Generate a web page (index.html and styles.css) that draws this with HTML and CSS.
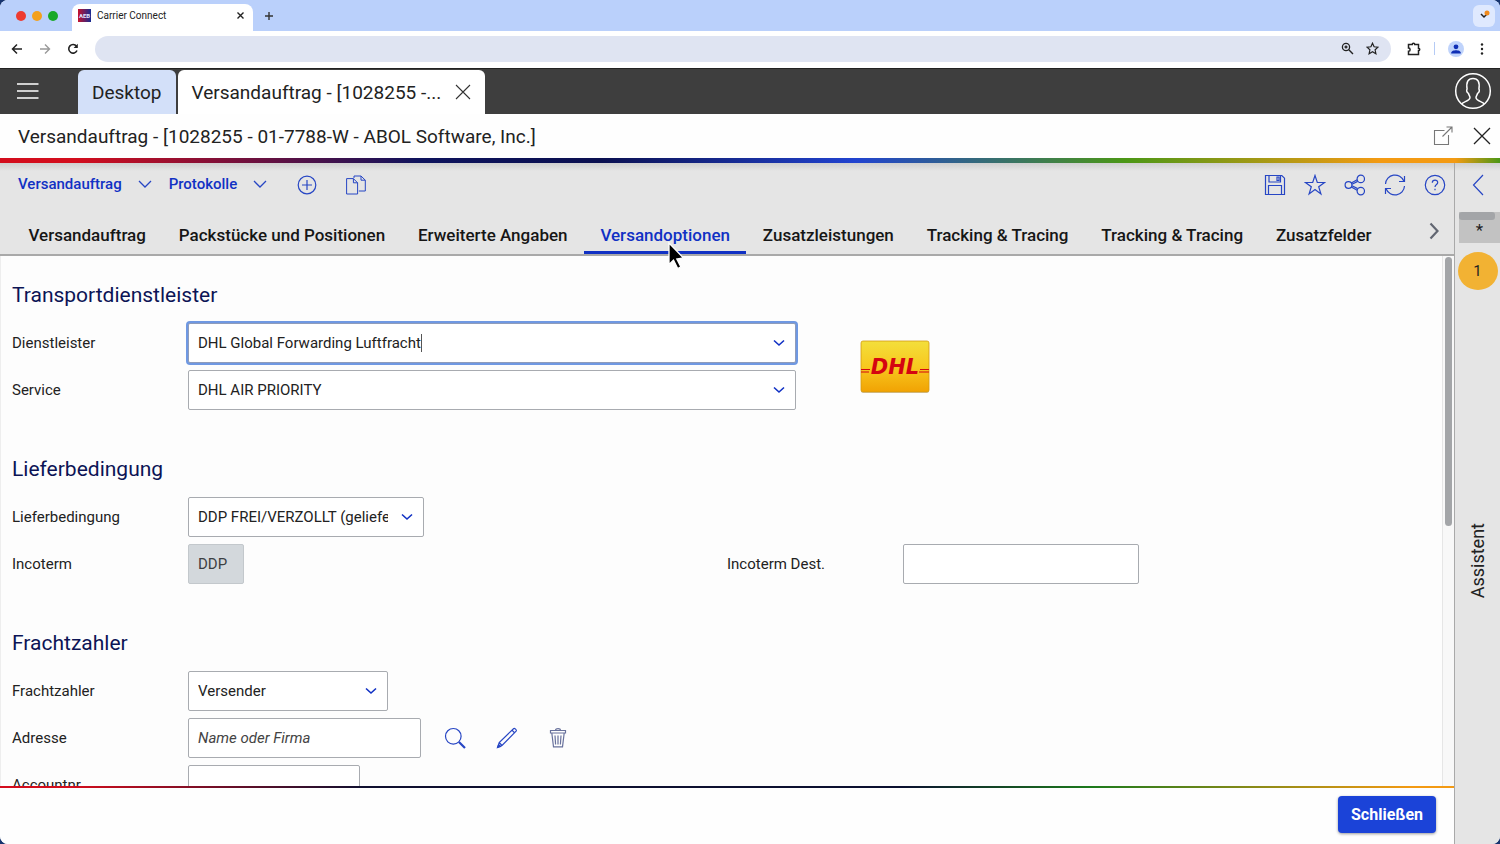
FILE: index.html
```html
<!DOCTYPE html>
<html lang="de">
<head>
  <meta charset="UTF-8">
  <meta name="viewport" content="width=device-width, initial-scale=1.0">
  <title>Carrier Connect</title>
  <link rel="stylesheet" href="styles.css">
</head>
<body>
  <div class="window">
    <div class="tabstrip">
      <div class="lights">
        <span class="light red"></span>
        <span class="light yellow"></span>
        <span class="light green"></span>
      </div>
      <div class="browser-tab">
        <svg class="favicon" width="13" height="13" viewBox="0 0 13 13">
          <defs>
            <linearGradient id="fav"><stop offset="0" stop-color="#c5122c"/><stop offset="1" stop-color="#152c93"/></linearGradient>
          </defs>
          <rect width="13" height="13" fill="url(#fav)"/>
          <text x="6.5" y="9" text-anchor="middle" font-size="6" font-family="Roboto, sans-serif" font-weight="700" fill="#dfe3ff">AEB</text>
        </svg>
        <span class="browser-title">Carrier Connect</span>
        <button class="plain" aria-label="Tab schließen">
          <svg width="9" height="9" viewBox="0 0 9 9"><path d="M1.5 1.5l6 6M7.5 1.5l-6 6" stroke="#222" stroke-width="1.4"/></svg>
        </button>
      </div>
      <button class="plain new-tab" aria-label="Neuer Tab">
        <svg width="10" height="10" viewBox="0 0 10 10"><path d="M5 1v8M1 5h8" stroke="#333" stroke-width="1.4"/></svg>
      </button>
      <button class="plain tab-search" aria-label="Tabs durchsuchen">
        <svg width="22" height="22" viewBox="0 0 22 22"><path d="M8 9l3 3 3-3" fill="none" stroke="#222" stroke-width="1.5"/><circle cx="14" cy="8" r="2.5" fill="#f08a1c"/></svg>
      </button>
    </div>

    <div class="browser-bar">
      <button class="plain nav" aria-label="Zurück">
        <svg width="12" height="12" viewBox="0 0 12 12"><path d="M11 6H2M6 1.5L1.5 6 6 10.500" fill="none" stroke="#222" stroke-width="1.5"/></svg>
      </button>
      <button class="plain nav" aria-label="Vor">
        <svg width="12" height="12" viewBox="0 0 12 12"><path d="M1 6h9M6 1.500L10.500 6 6 10.500" fill="none" stroke="#999" stroke-width="1.4"/></svg>
      </button>
      <button class="plain nav" aria-label="Neu laden">
        <svg width="12" height="12" viewBox="0 0 12 12"><path d="M10 7.500A4.300 4.300 0 1 1 9.500 3.200" fill="none" stroke="#222" stroke-width="1.6"/><path d="M10.800 .8v4.200H6.600z" fill="#222"/></svg>
      </button>
      <div class="address">
        <input type="text" aria-label="Adressleiste">
        <svg width="13" height="13" viewBox="0 0 13 13"><circle cx="5" cy="5" r="3.600" fill="none" stroke="#222" stroke-width="1.300"/><path d="M3.500 5h3M5 3.500v3M7.800 7.800L12 12" stroke="#222" stroke-width="1.400"/></svg>
        <svg width="13" height="13" viewBox="0 0 13 13"><path d="M6.500 1.200l1.600 3.600 3.900.4-2.900 2.600.8 3.900-3.400-2-3.400 2 .8-3.900L1 5.200l3.900-.4z" fill="none" stroke="#222" stroke-width="1.200"/></svg>
      </div>
      <svg width="14" height="14" viewBox="0 0 14 14"><path d="M1.500 2.500h3.700a1.300 1.300 0 0 1 2.600 0h3.700v3.700a1.200 1.200 0 0 1 0 2.400v3.900h-10V9.300a1.600 1.600 0 0 0 0-3.200z" fill="none" stroke="#222" stroke-width="1.500"/></svg>
      <span class="bar-sep"></span>
      <svg width="16" height="16" viewBox="0 0 16 16"><circle cx="8" cy="8" r="8" fill="#bfd3fb"/><circle cx="8" cy="5.800" r="2.400" fill="#0f2fb5"/><path d="M3.200 12.500v-.8C3.200 10 6 9.200 8 9.200s4.800.8 4.800 2.500v.8z" fill="#0f2fb5"/></svg>
      <svg width="4" height="14" viewBox="0 0 4 14" fill="#222"><circle cx="2" cy="2.500" r="1.200"/><circle cx="2" cy="7" r="1.200"/><circle cx="2" cy="11.500" r="1.200"/></svg>
    </div>

    <header class="app-header">
      <button class="plain burger" aria-label="Menü">
        <svg width="22" height="18" viewBox="0 0 22 18"><path d="M0 2h21.500M0 9h21.500M0 16h21.500" stroke="#fff" stroke-width="1.500"/></svg>
      </button>
      <a class="app-tab" href="#">Desktop</a>
      <div class="app-tab active">
        <a href="#">Versandauftrag - [1028255 -...</a>
        <button class="plain" aria-label="Schließen">
          <svg width="16" height="16" viewBox="0 0 16 16"><path d="M1 1l14 14M15 1L1 15" stroke="#333" stroke-width="1.100"/></svg>
        </button>
      </div>
      <button class="plain user" aria-label="Benutzer">
        <svg width="38" height="38" viewBox="0 0 38 38" fill="none" stroke="#fff" stroke-width="1.500">
          <circle cx="19" cy="19" r="17.300"/>
          <path d="M7.500 32c1.500-2.500 8.500-2.800 8.500-6.500 0-1.500-1-2-1.600-4.200-1.800-.9-2.100-3.300-1.300-4.200C12 10 14 6.500 19 6.500s7 3.500 5.900 10.600c.8.900.5 3.300-1.300 4.200-.6 2.200-1.600 2.700-1.600 4.200 0 3.700 7 4 8.500 6.500"/>
        </svg>
      </button>
    </header>

    <div class="title-bar">
      <h1>Versandauftrag - [1028255 - 01-7788-W - ABOL Software, Inc.]</h1>
      <button class="plain" aria-label="In neuem Fenster öffnen">
        <svg width="20" height="20" viewBox="0 0 20 20" fill="none" stroke="#777" stroke-width="1.100"><path d="M11.500 4.500H1.500v14h14V9M9.500 10.500L19 1M13.500 1H19v5.500"/></svg>
      </button>
      <button class="plain" aria-label="Fenster schließen">
        <svg width="18" height="18" viewBox="0 0 18 18"><path d="M1 1l16 16M17 1L1 17" stroke="#222" stroke-width="1.300"/></svg>
      </button>
    </div>
    <div class="rainbow"></div>

    <div class="workspace">
      <main class="main">
        <div class="tools">
          <div class="toolbar">
            <button class="menu">Versandauftrag
              <svg width="14" height="8" viewBox="0 0 14 8"><path d="M1 1l6 6 6-6" fill="none" stroke="#2746c4" stroke-width="1.300"/></svg>
            </button>
            <button class="menu">Protokolle
              <svg width="14" height="8" viewBox="0 0 14 8"><path d="M1 1l6 6 6-6" fill="none" stroke="#2746c4" stroke-width="1.300"/></svg>
            </button>
            <button class="plain add" aria-label="Neu">
              <svg class="icon" width="20" height="20" viewBox="0 0 20 20"><circle cx="10" cy="10" r="8.800"/><path d="M10 5v10M5 10h10"/></svg>
            </button>
            <button class="plain copy" aria-label="Kopieren">
              <svg class="icon thin" width="20" height="20" viewBox="0 0 20 20"><path d="M.6 3.600h6.800l4.200 4.200v11.200H.6zM7.400 3.600v4.200h4.200M8 3V1h7l4.300 4.200V16h-6.500M15 1v4.200h4.300"/></svg>
            </button>
            <div class="actions">
              <button class="plain" aria-label="Speichern">
                <svg class="icon" width="22" height="22" viewBox="0 0 22 22"><path d="M1.500 1.500h16.300l2.700 2.700v16.300h-19zM5 1.500v6.500h11.500V1.500M13 3h2v3.500h-2zM4.500 20.500v-9h13v9"/></svg>
              </button>
              <button class="plain" aria-label="Favorit">
                <svg class="icon" width="22" height="22" viewBox="0 0 22 22"><path d="M11 1.500l2.300 7h7.200l-5.800 4.300 2.200 7.200-5.900-4.400L5.100 20l2.200-7.200L1.500 8.500h7.200z"/></svg>
              </button>
              <button class="plain" aria-label="Teilen">
                <svg class="icon" width="22" height="22" viewBox="0 0 22 22"><circle cx="4.500" cy="11" r="3.400"/><circle cx="16.800" cy="4.900" r="3.700"/><circle cx="16.800" cy="17.100" r="3.700"/><path d="M7.300 9L13.100 5.800M8 10.200l5.700-2.800M7.300 13l5.800 3.200M8 11.800l5.700 2.800"/></svg>
              </button>
              <button class="plain" aria-label="Aktualisieren">
                <svg class="icon" width="22" height="22" viewBox="0 0 22 22"><path d="M1.500 10A9.500 9.500 0 0 1 19.800 7M20.500 2v5.500H15M20.500 12A9.500 9.500 0 0 1 2.200 15M1.500 20v-5.500H7"/></svg>
              </button>
              <button class="plain" aria-label="Hilfe">
                <svg class="icon" width="22" height="22" viewBox="0 0 22 22"><circle cx="11" cy="11" r="9.700"/><path d="M8.300 8.800c0-3.600 5.600-3.500 5.400-.2C13.600 10.500 11 10.500 11 13M11 14.700v1.600"/></svg>
              </button>
            </div>
          </div>
          <nav class="tabs">
            <a class="tab" href="#">Versandauftrag</a>
            <a class="tab" href="#">Packstücke und Positionen</a>
            <a class="tab" href="#">Erweiterte Angaben</a>
            <a class="tab selected" href="#">Versandoptionen
              <svg class="cursor" width="18" height="30" viewBox="0 0 18 30"><path d="M2 2v21.500l4.500-4.300 4.200 8.300 3.200-1.600-4.100-8L16.500 17z" fill="#000" stroke="#fff" stroke-width="1.300"/></svg>
            </a>
            <a class="tab" href="#">Zusatzleistungen</a>
            <a class="tab" href="#">Tracking &amp; Tracing</a>
            <a class="tab" href="#">Tracking &amp; Tracing</a>
            <a class="tab" href="#">Zusatzfelder</a>
            <button class="plain more" aria-label="Weitere Reiter">
              <svg width="10" height="18" viewBox="0 0 10 18"><path d="M1.500 1.500L8.500 9l-7 7.500" fill="none" stroke="#626772" stroke-width="2.200"/></svg>
            </button>
          </nav>
        </div>

        <div class="content">
          <form class="form">
            <section>
              <h2>Transportdienstleister</h2>
              <div class="carrier">
                <div class="rows wide">
                  <div class="row">
                    <label for="carrier">Dienstleister</label>
                    <div class="combo focused">
                      <input id="carrier" type="text" value="DHL Global Forwarding Luftfracht">
                      <span class="caret"></span>
                      <button type="button" class="plain" aria-label="Auswahl öffnen">
                        <svg class="chevron" width="12" height="8" viewBox="0 0 12 8"><path d="M1 1.500l5 4.500 5-4.500"/></svg>
                      </button>
                    </div>
                  </div>
                  <div class="row">
                    <label for="service">Service</label>
                    <div class="select">
                      <select id="service"><option>DHL AIR PRIORITY</option></select>
                      <svg class="chevron" width="12" height="8" viewBox="0 0 12 8"><path d="M1 1.500l5 4.500 5-4.500"/></svg>
                    </div>
                  </div>
                </div>
                <svg class="dhl" width="70" height="54" viewBox="0 0 70 54">
                  <defs>
                    <linearGradient id="dhl" x2="0" y2="1"><stop offset="0" stop-color="#f3df3b"/><stop offset=".5" stop-color="#f8c81f"/><stop offset="1" stop-color="#f1a203"/></linearGradient>
                  </defs>
                  <rect x="1" y="2" width="68" height="51" rx="2" fill="#cfcac0"/>
                  <rect x="1" y="1" width="68" height="51" rx="2" fill="url(#dhl)" stroke="#d39b12" stroke-width=".8"/>
                  <path d="M1 29.500h9M1 32h8M60 29.500h9M59 32h10" stroke="#d40511" stroke-width="1.200"/>
                  <text x="35" y="34" text-anchor="middle" font-family="DejaVu Sans, sans-serif" font-size="21" font-weight="700" font-style="italic" fill="#d40511">DHL</text>
                </svg>
              </div>
            </section>

            <section>
              <h2>Lieferbedingung</h2>
              <div class="rows">
                <div class="row">
                  <label for="terms">Lieferbedingung</label>
                  <div class="select w-terms">
                    <select id="terms"><option>DDP FREI/VERZOLLT (geliefert Zoll bezahlt)</option></select>
                    <svg class="chevron" width="12" height="8" viewBox="0 0 12 8"><path d="M1 1.500l5 4.500 5-4.500"/></svg>
                  </div>
                </div>
                <div class="halves">
                  <div class="row">
                    <label for="incoterm">Incoterm</label>
                    <input class="box w-code" id="incoterm" type="text" value="DDP" disabled>
                  </div>
                  <div class="row">
                    <label for="dest">Incoterm Dest.</label>
                    <input class="box w-terms" id="dest" type="text">
                  </div>
                </div>
              </div>
            </section>

            <section>
              <h2>Frachtzahler</h2>
              <div class="rows">
                <div class="row">
                  <label for="payer">Frachtzahler</label>
                  <div class="select w-payer">
                    <select id="payer"><option>Versender</option></select>
                    <svg class="chevron" width="12" height="8" viewBox="0 0 12 8"><path d="M1 1.500l5 4.500 5-4.500"/></svg>
                  </div>
                </div>
                <div class="row">
                  <label for="address">Adresse</label>
                  <input class="box w-address" id="address" type="text" placeholder="Name oder Firma">
                  <div class="row-actions">
                    <button type="button" class="plain" aria-label="Suchen">
                      <svg class="icon" width="22" height="22" viewBox="0 0 22 22"><circle cx="9.300" cy="9.300" r="7.800"/><path d="M15 15l6 6" stroke-width="2.200"/></svg>
                    </button>
                    <button type="button" class="plain" aria-label="Bearbeiten">
                      <svg class="icon" width="22" height="22" viewBox="0 0 22 22"><path d="M2 20l1.200-4.500L17.500 1.700c1-1 3.600 1.400 2.600 2.500L6 18.500zM3.200 15.500L6 18.500M16 3.200L18.700 6"/><path d="M1.500 20.500l1-3 2 2z" fill="#2746c4"/></svg>
                    </button>
                    <button type="button" class="plain" aria-label="Löschen">
                      <svg class="icon trash" width="20" height="22" viewBox="0 0 20 22"><path d="M2.500 3.500h15v2.500h-15zM7.500 3.500c0-2.500 5-2.500 5 0M3.800 6l1.700 13.800h9L16.200 6M7 8.500l.6 9M10 8.500v9M13 8.500l-.6 9"/></svg>
                    </button>
                  </div>
                </div>
                <div class="row">
                  <label for="account">Accountnr.</label>
                  <input class="box w-account" id="account" type="text">
                </div>
              </div>
            </section>
          </form>
          <div class="scrollbar"><div class="thumb"></div></div>
        </div>

        <footer class="footer">
          <button class="primary">Schließen</button>
        </footer>
      </main>

      <aside class="sidebar">
        <button class="plain collapse" aria-label="Ausklappen">
          <svg class="icon" width="12" height="22" viewBox="0 0 12 22"><path d="M11 1L1.500 11 11 21"/></svg>
        </button>
        <div class="filter"><span class="filter-bar"></span>*</div>
        <span class="badge">1</span>
        <span class="assistant">Assistent</span>
      </aside>
    </div>
  </div>
</body>
</html>
```
FILE: styles.css
```css
* {
  box-sizing: border-box;
}

body {
  margin: 0;
  background: #17346f;
  color: #222;
  font-family: Roboto, sans-serif;
  font-size: 15px;
}

a {
  color: inherit;
  text-decoration: none;
}

svg {
  display: block;
  flex: none;
}

input,
select,
button {
  font: inherit;
  color: inherit;
}

.plain {
  display: flex;
  align-items: center;
  justify-content: center;
  padding: 0;
  border: 0;
  background: none;
}

.window {
  display: flex;
  flex-direction: column;
  height: 100vh;
  overflow: hidden;
  border-radius: 8px;
  background: #fdfdfd;
}

/* browser */
.tabstrip {
  display: flex;
  align-items: center;
  height: 31px;
  padding: 0 5px 0 16px;
  background: #bad0fb;
}

.lights {
  display: flex;
  gap: 6px;
  width: 56px;
}

.light {
  width: 10px;
  height: 10px;
  border-radius: 50%;
}

.red {
  background: #ee3a30;
}

.yellow {
  background: #f3a01c;
}

.green {
  background: #17a927;
}

.browser-tab {
  display: flex;
  align-items: center;
  align-self: flex-end;
  width: 181px;
  height: 27px;
  padding: 0 8px 4px 6px;
  border-radius: 8px 8px 0 0;
  background: #fff;
}

.browser-title {
  flex: 1;
  margin-left: 6px;
  font-size: 10px;
}

.new-tab {
  margin-left: 11px;
}

.tab-search {
  width: 22px;
  height: 22px;
  margin-left: auto;
  border-radius: 6px;
  background: #dfe9fe;
}

.browser-bar {
  display: flex;
  align-items: center;
  gap: 16px;
  height: 37px;
  padding: 0 16px 2px 11px;
  background: #fff;
}

.address {
  display: flex;
  align-items: center;
  gap: 12px;
  flex: 1;
  height: 26px;
  padding: 0 12px 0 16px;
  border-radius: 13px;
  background: #dfe4f2;
}

.address input {
  flex: 1;
  min-width: 0;
  border: 0;
  outline: 0;
  background: none;
}

.bar-sep {
  width: 1px;
  height: 13px;
  margin: 0 -3px;
  background: #b5cbf5;
}

/* application header */
.app-header {
  display: flex;
  align-items: flex-end;
  gap: 2px;
  height: 46px;
  background: #3e3e3e;
  border-top: 1px solid #222;
}

.burger {
  align-self: center;
  width: 58px;
  padding: 0 2px 2px 0;
  margin-right: 18px;
}

.app-tab {
  display: flex;
  align-items: center;
  height: 44px;
  padding: 0 14px;
  border-radius: 6px 6px 0 0;
  background: #d3e0f9;
  font-size: 19px;
}

.app-tab.active {
  gap: 14px;
  background: #fff;
}

.user {
  align-self: center;
  padding-bottom: 2px;
  margin: 0 8px 0 auto;
}

.title-bar {
  display: flex;
  align-items: center;
  gap: 20px;
  height: 44px;
  padding: 0 9px 0 18px;
  background: #fefefe;
}

.title-bar h1 {
  flex: 1;
  margin: 0;
  font-size: 19px;
  font-weight: 400;
}

.rainbow {
  flex: none;
  height: 5px;
  background: linear-gradient(90deg, #d30d1d 5%, #0d125c 28%, #0b1050 40%, #2143d0 57%, #4b9716 75%, #f39a13 92%, #f39a13 97%, #4b9716);
}

.workspace {
  display: flex;
  flex: 1;
  min-height: 0;
}

.main {
  display: flex;
  flex-direction: column;
  flex: 1;
  min-width: 0;
}

/* toolbar and tabs */
.tools {
  border-bottom: 2px solid #a9a9a9;
  background: linear-gradient(#cfcfcf, #e5e5e5 8px);
}

.toolbar {
  display: flex;
  align-items: center;
  height: 44px;
  padding: 0 8px 0 18px;
}

.menu {
  display: flex;
  align-items: center;
  gap: 16px;
  margin-right: 17px;
  padding: 0 0 2px;
  border: 0;
  background: none;
  color: #1131c4;
  font-size: 15px;
  font-weight: 500;
}

.icon {
  fill: none;
  stroke: #2746c4;
  stroke-width: 1.2;
}

.icon.thin {
  stroke-width: 1;
}

.add {
  margin-left: 13px;
}

.copy {
  margin-left: 29px;
}

.actions {
  display: flex;
  gap: 18px;
  margin-left: auto;
}

.tabs {
  display: flex;
  height: 47px;
  padding: 0 10px 0 12px;
}

.tab {
  position: relative;
  display: flex;
  flex: 1 0 auto;
  align-items: center;
  justify-content: center;
  padding-top: 12px;
  border-bottom: 3px solid transparent;
  color: #161616;
  font-size: 17px;
  font-weight: 500;
}

.tab.selected {
  border-color: #1131c4;
  color: #1131c4;
}

.cursor {
  position: absolute;
  top: 34px;
  left: 51%;
  z-index: 1;
}

.more {
  width: 32px;
  padding-left: 12px;
  margin-left: 24px;
}

/* form */
.content {
  display: flex;
  flex: 1;
  min-height: 0;
  overflow: hidden;
}

.form {
  display: flex;
  flex: 1;
  flex-direction: column;
  gap: 45px;
  min-width: 0;
  padding: 25px 0 0 11px;
  border-left: 1px solid #eee;
}

.form h2 {
  margin: 0 0 14px;
  color: #0c1455;
  font-size: 21px;
  font-weight: 400;
  line-height: 28px;
}

.carrier {
  display: flex;
  align-items: center;
  gap: 64px;
}

.rows {
  display: flex;
  flex-direction: column;
  gap: 7px;
}

.rows.wide {
  width: 784px;
}

.row {
  display: flex;
  align-items: center;
  height: 40px;
}

.row label {
  flex: none;
  width: 176px;
}

.halves {
  display: grid;
  grid-template-columns: 1fr 1fr;
}

.box,
.combo,
.select select {
  height: 40px;
  border: 1px solid #a8abb0;
  border-radius: 2px;
  background: #fff;
}

.box {
  padding: 0 9px;
}

.box:disabled {
  border-color: #c3c8cc;
  background: #d3d8dc;
  color: #3c4043;
}

.box::placeholder {
  color: #444;
  font-style: italic;
}

.combo {
  display: flex;
  align-items: center;
  flex: 1;
  padding: 0 10px 0 9px;
}

.combo.focused {
  border-color: #8f9cba;
  box-shadow: 0 0 0 2px #6f98e2;
}

.combo input {
  field-sizing: content;
  padding: 0;
  border: 0;
  outline: 0;
  background: none;
}

.combo button {
  margin-left: auto;
}

.caret {
  width: 1px;
  height: 18px;
  background: #555;
}

.select {
  display: grid;
  flex: 1;
  align-items: center;
}

.select select,
.select .chevron {
  grid-area: 1 / 1;
}

.select select {
  appearance: none;
  width: 100%;
  min-width: 0;
  padding: 0 35px 0 9px;
}

.select .chevron {
  justify-self: end;
  margin-right: 11px;
  pointer-events: none;
}

.chevron {
  fill: none;
  stroke: #1131c4;
  stroke-width: 1.6;
}

.w-terms {
  flex: none;
  width: 236px;
}

.w-code {
  width: 56px;
}

.w-payer {
  flex: none;
  width: 200px;
}

.w-address {
  width: 233px;
}

.w-account {
  width: 172px;
}

.row-actions {
  display: flex;
  gap: 30px;
  margin-left: 23px;
}

.trash {
  stroke: #68719c;
}

.scrollbar {
  width: 12px;
  padding: 1px 2px;
  border-left: 1px solid #e6e6e6;
  background: #f8f8f8;
}

.thumb {
  width: 7px;
  height: 51%;
  border-radius: 4px;
  background: #a3a5a8;
}

.footer {
  display: flex;
  align-items: center;
  justify-content: flex-end;
  flex: none;
  height: 58px;
  padding: 0 18px 3px 0;
  border-top: 2px solid;
  border-image: linear-gradient(90deg, #d30d1d 5%, #101030 25%, #0b1030 62%, #1c7a1c 75%, #f39a13 97%) 1;
  background: #fefefe;
}

.primary {
  height: 37px;
  padding: 0 13px;
  border: 0;
  border-radius: 4px;
  background: #1b43d8;
  box-shadow: 0 1px 3px #0006;
  color: #fff;
  font-size: 16px;
  font-weight: 700;
}

/* right hand bar */
.sidebar {
  display: flex;
  flex-direction: column;
  align-items: center;
  width: 46px;
  border-left: 1px solid #a9a9a9;
  background: linear-gradient(#cfcfcf, #e5e5e5 8px);
}

.collapse {
  height: 44px;
}

.filter {
  display: flex;
  flex-direction: column;
  align-items: center;
  align-self: stretch;
  height: 31px;
  margin: 5px 0 9px 4px;
  background: #c2c2c2;
  font-size: 17px;
}

.filter-bar {
  align-self: flex-start;
  width: 36px;
  height: 8px;
  border-radius: 3px;
  background: #a3a5a8;
}

.badge {
  display: flex;
  align-items: center;
  justify-content: center;
  width: 40px;
  height: 38px;
  border-radius: 50%;
  background: #f2b233;
}

.assistant {
  margin: auto 0;
  padding-bottom: 12px;
  writing-mode: sideways-lr;
  font-size: 18px;
}
```
